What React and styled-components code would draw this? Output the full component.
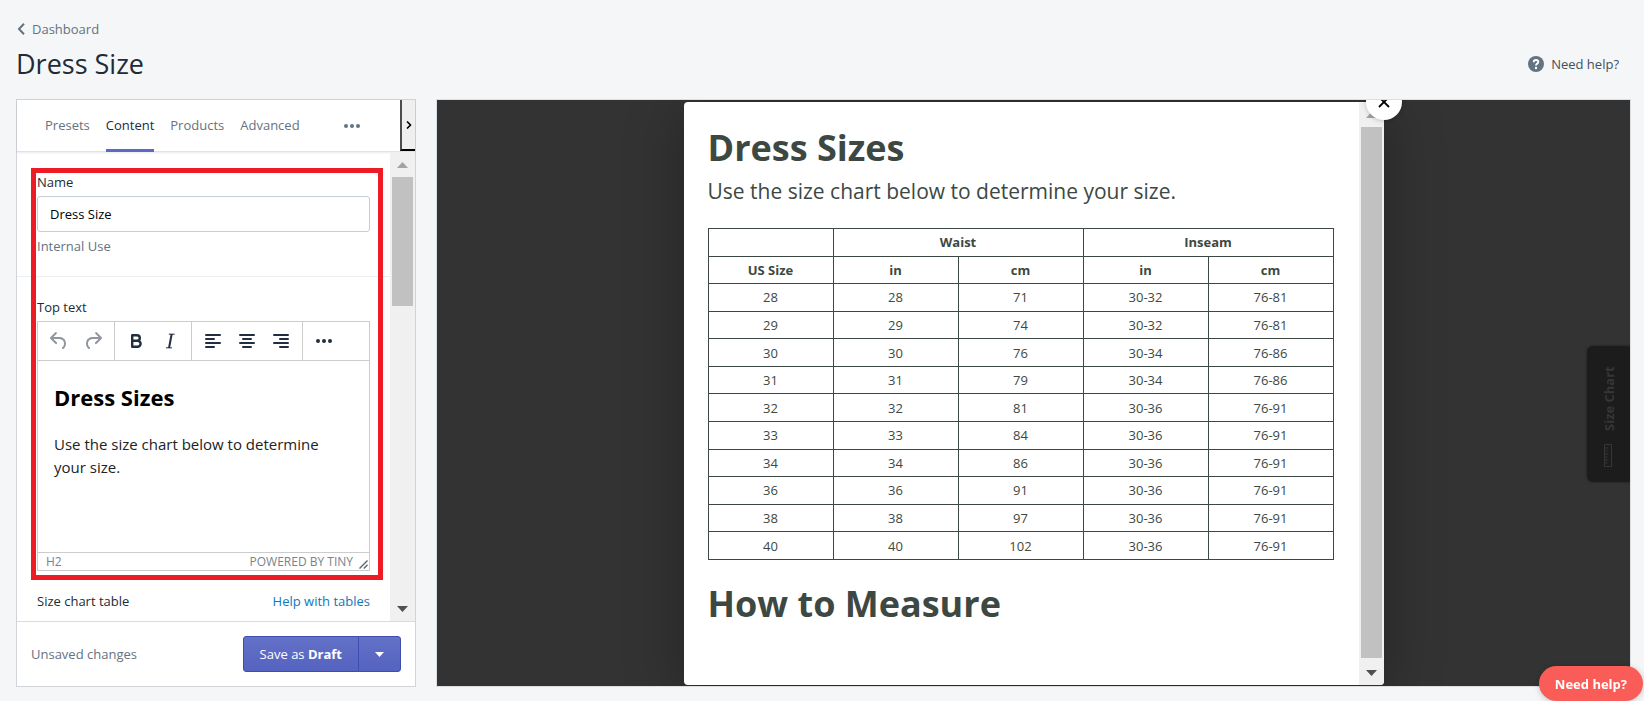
import React from 'react';
import styled, { createGlobalStyle } from 'styled-components';

const GlobalStyle = createGlobalStyle`
  * {
    box-sizing: border-box;
  }

  body {
    margin: 0;
    background: #f4f6f8;
    color: #212b36;
    font-family: "Open Sans", "Noto Sans", sans-serif;
    font-size: 13px;
    line-height: 20px;
  }

  button, input {
    font: inherit;
    margin: 0;
  }

  button {
    cursor: pointer;
  }

  svg {
    display: block;
    flex: none;
  }
`;

const Page = styled.div`
  display: flex;
  flex-direction: column;
  min-height: 100vh;
  padding: 19px 13px 14px 16px;
`;

/* Header */

const Breadcrumb = styled.a`
  display: flex;
  align-items: center;
  align-self: flex-start;
  gap: 7px;
  padding-left: 1px;
  color: #637381;
  text-decoration: none;
`;

const TitleBar = styled.header`
  display: flex;
  align-items: center;
  justify-content: space-between;
  margin: 9px 0 19px;
  padding-right: 12px;
`;

const PageTitle = styled.h1`
  margin: 0;
  font-size: 27px;
  font-weight: 500;
  line-height: 32px;
`;

const HelpLink = styled.a`
  display: flex;
  align-items: center;
  gap: 7px;
  color: #454f5b;
  text-decoration: none;
`;

const Workspace = styled.main`
  display: grid;
  grid-template-columns: 400px 1fr;
  gap: 20px;
  flex: 1;
`;

/* Sidebar */

const Sidebar = styled.section`
  display: flex;
  flex-direction: column;
  background: #fff;
  border: 1px solid #d0d3d7;
`;

const TabBar = styled.nav`
  display: flex;
  height: 52px;
  padding-left: 28px;
  border-bottom: 1px solid #dfe3e8;
  box-shadow: 0 1px 2px rgba(33, 43, 54, 0.1);
`;

const Tab = styled.button`
  height: 52px;
  margin-right: 16px;
  padding: 0;
  background: none;
  border: 0;
  border-top: 1px solid transparent;
  border-bottom: 3px solid ${({ $active }) => ($active ? '#5c6ac4' : 'transparent')};
  color: ${({ $active }) => ($active ? '#212b36' : '#637381')};
`;

const MoreTabs = styled.button`
  margin-left: 28px;
  padding: 0;
  background: none;
  border: 0;
  color: #637381;
`;

const CollapseButton = styled.button`
  display: flex;
  align-items: center;
  justify-content: center;
  width: 15px;
  margin-left: auto;
  padding: 0;
  background: #efefef;
  border: 0 solid #000;
  border-width: 0 0 2px 2px;
  border-left-color: #4c4c4c;
`;

const ScrollPane = styled.div`
  display: flex;
  flex: 1;
`;

const ScrollContent = styled.div`
  flex: 1;
  min-width: 0;
`;

const ScrollTrack = styled.div`
  display: flex;
  flex-direction: column;
  width: 25px;
  background: #f0f0f0;
`;

const ScrollArrow = styled.span`
  display: flex;
  align-items: center;
  justify-content: center;
  height: 25px;
  color: ${({ $muted }) => ($muted ? '#a3a3a3' : '#505050')};
`;

const ScrollThumb = styled.div`
  flex: ${({ $share }) => $share};
  margin: 0 2px;
  background: #c1c1c1;
`;

const ScrollRest = styled.div`
  flex: ${({ $share }) => $share};
`;

const Highlighted = styled.div`
  position: relative;

  &::after {
    content: "";
    position: absolute;
    inset: 16px 7px 11px 14px;
    border: 5px solid #ed1c24;
    pointer-events: none;
  }
`;

const Section = styled.div`
  padding: 20px;
  border-bottom: ${({ $divided }) => ($divided ? '1px solid #ebeef0' : '0')};
`;

const Label = styled.label`
  display: block;
  margin-bottom: 4px;
`;

const TextInput = styled.input`
  display: block;
  width: 100%;
  height: 36px;
  padding: 0 12px;
  border: 1px solid #c4cdd5;
  border-radius: 3px;
  color: #000;
`;

const HelpText = styled.div`
  margin-top: 4px;
  color: #637381;
`;

const SectionRow = styled.div`
  display: flex;
  justify-content: space-between;
  padding: 0 20px 10px;
`;

const TextLink = styled.a`
  color: #0b79bd;
  text-decoration: none;
`;

/* Rich text editor */

const Editor = styled.div`
  display: flex;
  flex-direction: column;
  height: 250px;
  border: 1px solid #ccc;
`;

const Toolbar = styled.div`
  display: flex;
  height: 39px;
  border-bottom: 1px solid #ccc;
`;

const ToolGroup = styled.div`
  display: flex;
  padding: 0 4px;

  & + & {
    border-left: 1px solid #ccc;
  }
`;

const ToolButton = styled.button`
  display: flex;
  align-items: center;
  justify-content: center;
  width: 34px;
  padding: 0;
  background: none;
  border: 0;
  color: #222f3e;

  &:disabled {
    color: #9095a0;
  }
`;

const EditorBody = styled.div`
  flex: 1;
  padding: 21px 16px 0;
  color: #222;
  font-size: 15px;
  line-height: 23px;
  outline: 0;

  h2 {
    margin: 0 0 21px;
    color: #000;
    font-size: 22px;
    line-height: 30px;
  }

  p {
    margin: 0;
  }
`;

const StatusBar = styled.div`
  display: flex;
  align-items: center;
  height: 18px;
  padding: 0 1px 0 8px;
  border-top: 1px solid #ccc;
  color: #7a828b;
  font-size: 12px;
  line-height: 16px;

  span:first-child {
    margin-right: auto;
  }

  svg {
    margin: 6px 0 0 6px;
  }
`;

/* Sidebar footer */

const Footer = styled.footer`
  display: flex;
  align-items: center;
  justify-content: space-between;
  padding: 14px;
  border-top: 1px solid #d9dcdf;
  color: #637381;
`;

const ButtonGroup = styled.div`
  display: flex;
`;

const PrimaryButton = styled.button`
  height: 36px;
  padding: 0 16px;
  background: linear-gradient(#6371c7, #5563c1);
  border: 1px solid #3f4eae;
  border-radius: 3px 0 0 3px;
  color: #fff;

  & + & {
    margin-left: -1px;
    border-radius: 0 3px 3px 0;
  }
`;

/* Preview */

const Preview = styled.section`
  position: relative;
  display: flex;
  justify-content: center;
  overflow: hidden;
  padding: 2px 0 1px;
  background: #333;
  border: 1px solid #dcdfe2;
`;

const Modal = styled.div`
  position: relative;
  display: flex;
  width: 700px;
  background: #fff;
  border-radius: 4px;
  box-shadow: 0 8px 60px rgba(0, 0, 0, 0.3);
  color: #3d4843;
`;

const ModalContent = styled.div`
  flex: 1;
  padding: 22px 25px 22px 24px;
`;

const ModalTrack = styled(ScrollTrack)`
  border-radius: 0 4px 4px 0;
`;

const CloseButton = styled.button`
  position: absolute;
  top: -18px;
  right: -18px;
  display: flex;
  align-items: center;
  justify-content: center;
  width: 36px;
  height: 36px;
  padding: 0;
  background: #fff;
  border: 0;
  border-radius: 50%;
  box-shadow: 0 1px 4px rgba(0, 0, 0, 0.2);
  color: #000;
`;

const ModalHeading = styled.h2`
  margin: 0;
  font-size: 36px;
  line-height: 48px;
`;

const Lead = styled.p`
  margin: 3px 0 21px;
  font-size: 21px;
  line-height: 32px;
`;

const SizeTable = styled.table`
  width: 100%;
  height: 332px;
  margin-bottom: 20px;
  border-collapse: collapse;
  table-layout: fixed;
  text-align: center;

  th, td {
    padding: 0;
    border: 1px solid #3d4843;
  }
`;

const SizeChartTab = styled.button`
  position: absolute;
  top: 246px;
  right: 0;
  display: flex;
  align-items: center;
  gap: 13px;
  width: 43px;
  height: 136px;
  padding: 15px 0 0;
  background: #1c1c1c;
  border: 0;
  border-radius: 0 6px 6px 0;
  box-shadow: 0 0 3px rgba(0, 0, 0, 0.4);
  color: #363636;
  font-weight: 700;
  writing-mode: vertical-rl;
  transform: rotate(180deg);
`;

const ChatButton = styled.button`
  position: fixed;
  right: 1px;
  bottom: 0;
  height: 35px;
  padding: 0 16px;
  background: #fa5d57;
  border: 0;
  border-radius: 18px;
  box-shadow: 0 1px 6px rgba(0, 0, 0, 0.2);
  color: #fff;
  font-weight: 700;
`;

/* Icons */

const Dots = () => (
  <svg width="16" height="4" viewBox="0 0 16 4" fill="currentColor">
    <circle cx="2" cy="2" r="2" />
    <circle cx="8" cy="2" r="2" />
    <circle cx="14" cy="2" r="2" />
  </svg>
);

const Triangle = ({ up, width = 11, height = 6 }) => (
  <svg width={width} height={height} viewBox="0 0 10 6" preserveAspectRatio="none" fill="currentColor">
    <path d={up ? 'M0 6h10L5 0z' : 'M0 0h10L5 6z'} />
  </svg>
);

const ChevronLeft = () => (
  <svg width="8" height="12" viewBox="0 0 8 12" fill="none" stroke="currentColor" strokeWidth="2">
    <path d="M7 .8 2 6l5 5.2" />
  </svg>
);

const ChevronRight = () => (
  <svg width="6" height="8" viewBox="0 0 6 8" fill="none" stroke="#000" strokeWidth="1.6">
    <path d="m1 .5 3.5 3.5L1 7.5" />
  </svg>
);

const QuestionIcon = () => (
  <svg width="16" height="16" viewBox="0 0 16 16">
    <circle cx="8" cy="8" r="8" fill="#637381" />
    <path d="M5.7 6.2C5.7 4.7 6.7 4 8 4s2.3.8 2.3 2c0 1.7-2.3 1.6-2.3 3.4" fill="none" stroke="#fff" strokeWidth="1.9" />
    <circle cx="8" cy="12" r="1.2" fill="#fff" />
  </svg>
);

const UndoIcon = ({ flip }) => (
  <svg width="24" height="24" viewBox="0 0 24 24" fill="currentColor">
    <path
      transform={flip ? 'matrix(-1 0 0 1 24 0)' : undefined}
      d="M6.4 8H12c3.7 0 6.2 2 6.8 5.1.6 2.7-.4 5.6-2.3 6.8a1 1 0 0 1-1-1.8c1.1-.6 1.8-2.7 1.4-4.6-.5-2.1-2.1-3.5-4.9-3.5H6.4l3.3 3.3a1 1 0 1 1-1.4 1.4l-5-5a1 1 0 0 1 0-1.4l5-5a1 1 0 0 1 1.4 1.4L6.4 8z"
    />
  </svg>
);

const BoldIcon = () => (
  <svg width="24" height="24" viewBox="0 0 24 24" fill="none" stroke="currentColor" strokeWidth="2.4" strokeLinejoin="round">
    <path d="M8.2 6.2h4.8a2.8 2.8 0 0 1 0 5.6H8.2zM8.2 11.8h5.4a3 3 0 0 1 0 6H8.2z" />
  </svg>
);

const ItalicIcon = () => (
  <svg width="24" height="24" viewBox="0 0 24 24" fill="none" stroke="currentColor">
    <path d="M10.8 5.2h5.9M8 18.8h5.9" strokeWidth="1" />
    <path d="M13.7 5 11 19" strokeWidth="2" />
  </svg>
);

const ALIGN_LINES = {
  left: 'M5 6h14M5 10h8M5 14h14M5 18h8',
  center: 'M5 6h14M8 10h8M5 14h14M8 18h8',
  right: 'M5 6h14M11 10h8M5 14h14M11 18h8',
};

const AlignIcon = ({ side }) => (
  <svg width="24" height="24" viewBox="0 0 24 24" fill="none" stroke="currentColor" strokeWidth="2" strokeLinecap="round">
    <path d={ALIGN_LINES[side]} />
  </svg>
);

const ResizeIcon = () => (
  <svg width="9" height="9" viewBox="0 0 9 9" fill="none" stroke="#5c656f" strokeWidth="1.4">
    <path d="M.5 8.5l8-8M4.8 8.5l3.7-3.7" />
  </svg>
);

const CloseIcon = () => (
  <svg width="12" height="12" viewBox="0 0 12 12" fill="none" stroke="currentColor" strokeWidth="1.8">
    <path d="m1 1 10 10M11 1 1 11" />
  </svg>
);

const RulerIcon = () => (
  <svg width="8" height="23" viewBox="0 0 8 23" fill="none" stroke="currentColor">
    <path d="M.5.5h7v22h-7zM7.5 4h-3M7.5 7h-4M7.5 10h-3M7.5 13h-4M7.5 16h-3M7.5 19h-4" />
  </svg>
);

const TABS = ['Presets', 'Content', 'Products', 'Advanced'];

const SIZES = [
  ['28', '28', '71', '30-32', '76-81'],
  ['29', '29', '74', '30-32', '76-81'],
  ['30', '30', '76', '30-34', '76-86'],
  ['31', '31', '79', '30-34', '76-86'],
  ['32', '32', '81', '30-36', '76-91'],
  ['33', '33', '84', '30-36', '76-91'],
  ['34', '34', '86', '30-36', '76-91'],
  ['36', '36', '91', '30-36', '76-91'],
  ['38', '38', '97', '30-36', '76-91'],
  ['40', '40', '102', '30-36', '76-91'],
];

const Scrollbar = ({ as: Track = ScrollTrack, thumb, rest }) => (
  <Track aria-hidden="true">
    <ScrollArrow $muted><Triangle up /></ScrollArrow>
    <ScrollThumb $share={thumb} />
    <ScrollRest $share={rest} />
    <ScrollArrow><Triangle /></ScrollArrow>
  </Track>
);

const TextEditor = () => (
  <Editor>
    <Toolbar>
      <ToolGroup>
        <ToolButton aria-label="Undo" disabled><UndoIcon /></ToolButton>
        <ToolButton aria-label="Redo" disabled><UndoIcon flip /></ToolButton>
      </ToolGroup>
      <ToolGroup>
        <ToolButton aria-label="Bold"><BoldIcon /></ToolButton>
        <ToolButton aria-label="Italic"><ItalicIcon /></ToolButton>
      </ToolGroup>
      <ToolGroup>
        <ToolButton aria-label="Align left"><AlignIcon side="left" /></ToolButton>
        <ToolButton aria-label="Align center"><AlignIcon side="center" /></ToolButton>
        <ToolButton aria-label="Align right"><AlignIcon side="right" /></ToolButton>
      </ToolGroup>
      <ToolGroup>
        <ToolButton aria-label="More"><Dots /></ToolButton>
      </ToolGroup>
    </Toolbar>
    <EditorBody
      role="textbox"
      aria-multiline="true"
      aria-labelledby="top-text-label"
      contentEditable
      suppressContentEditableWarning
      spellCheck={false}
    >
      <h2>Dress Sizes</h2>
      <p>Use the size chart below to determine your size.</p>
    </EditorBody>
    <StatusBar>
      <span>H2</span>
      <span>POWERED BY TINY</span>
      <ResizeIcon />
    </StatusBar>
  </Editor>
);

const SizeChart = () => (
  <SizeTable>
    <tbody>
      <tr>
        <td />
        <th colSpan={2}>Waist</th>
        <th colSpan={2}>Inseam</th>
      </tr>
      <tr>
        <th>US Size</th>
        <th>in</th>
        <th>cm</th>
        <th>in</th>
        <th>cm</th>
      </tr>
      {SIZES.map((row) => (
        <tr key={row[0]}>
          {row.map((value, i) => <td key={i}>{value}</td>)}
        </tr>
      ))}
    </tbody>
  </SizeTable>
);

const App = () => {
  const [active, setActive] = React.useState('Content');

  return (
    <>
      <GlobalStyle />
      <Page>
        <Breadcrumb href="#dashboard"><ChevronLeft />Dashboard</Breadcrumb>
        <TitleBar>
          <PageTitle>Dress Size</PageTitle>
          <HelpLink href="#help"><QuestionIcon />Need help?</HelpLink>
        </TitleBar>
        <Workspace>
          <Sidebar>
            <TabBar>
              {TABS.map((tab) => (
                <Tab key={tab} $active={tab === active} onClick={() => setActive(tab)}>{tab}</Tab>
              ))}
              <MoreTabs aria-label="More tabs"><Dots /></MoreTabs>
              <CollapseButton aria-label="Collapse"><ChevronRight /></CollapseButton>
            </TabBar>
            <ScrollPane>
              <ScrollContent>
                <Highlighted>
                  <Section $divided>
                    <Label htmlFor="name">Name</Label>
                    <TextInput id="name" type="text" defaultValue="Dress Size" />
                    <HelpText>Internal Use</HelpText>
                  </Section>
                  <Section>
                    <Label as="div" id="top-text-label">Top text</Label>
                    <TextEditor />
                  </Section>
                </Highlighted>
                <SectionRow>
                  <span>Size chart table</span>
                  <TextLink href="#tables">Help with tables</TextLink>
                </SectionRow>
              </ScrollContent>
              <Scrollbar thumb={129} rest={290} />
            </ScrollPane>
            <Footer>
              <span>Unsaved changes</span>
              <ButtonGroup>
                <PrimaryButton>Save as <b>Draft</b></PrimaryButton>
                <PrimaryButton aria-label="More save options"><Triangle width={9} height={5} /></PrimaryButton>
              </ButtonGroup>
            </Footer>
          </Sidebar>
          <Preview>
            <Modal>
              <ModalContent>
                <ModalHeading>Dress Sizes</ModalHeading>
                <Lead>Use the size chart below to determine your size.</Lead>
                <SizeChart />
                <ModalHeading>How to Measure</ModalHeading>
              </ModalContent>
              <Scrollbar as={ModalTrack} thumb={530} rest={2} />
              <CloseButton aria-label="Close"><CloseIcon /></CloseButton>
            </Modal>
            <SizeChartTab><RulerIcon />Size Chart</SizeChartTab>
          </Preview>
        </Workspace>
      </Page>
      <ChatButton>Need help?</ChatButton>
    </>
  );
};

export default App;
